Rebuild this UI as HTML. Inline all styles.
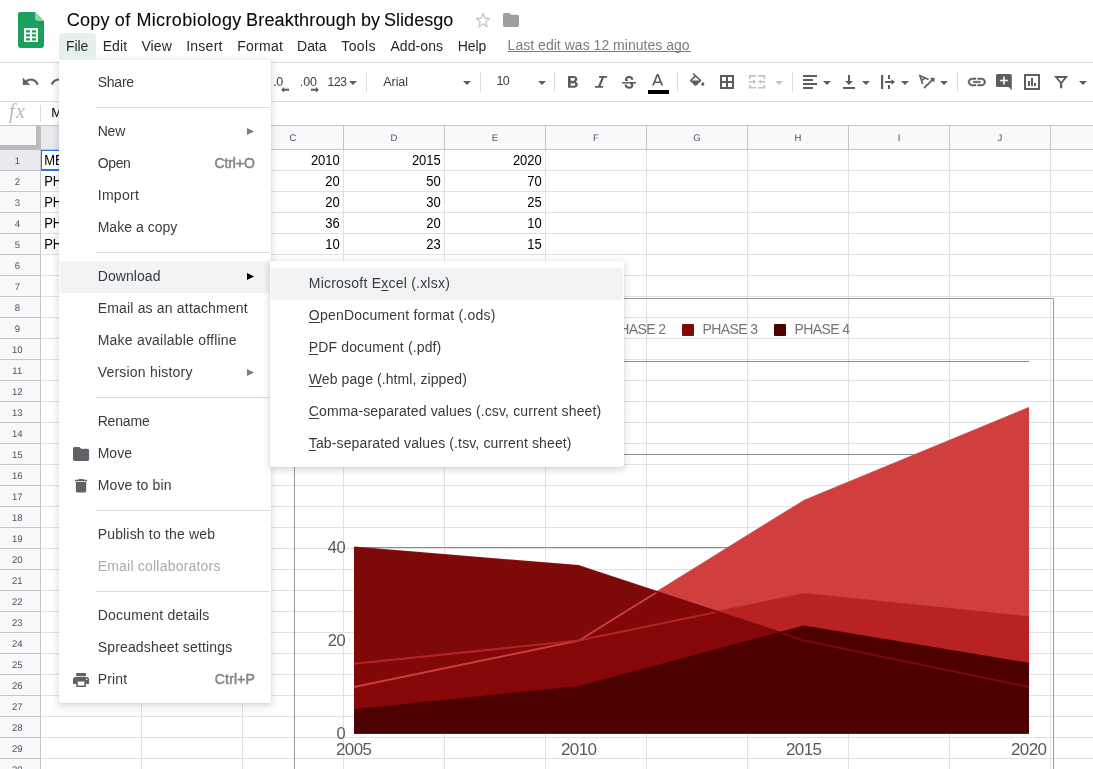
<!DOCTYPE html>
<html lang="en">
<head>
<meta charset="utf-8">
<title>Copy of Microbiology Breakthrough by Slidesgo - Google Sheets</title>
<style>
html,body{margin:0;padding:0;background:#fff;}
body{width:1093px;height:769px;overflow:hidden;position:relative;font-family:"Liberation Sans", Arial, sans-serif;}
.t{position:absolute;white-space:pre;line-height:20px;height:20px;font-family:"Liberation Sans", Arial, sans-serif;}
#app{position:absolute;left:0;top:0;width:1093px;height:769px;overflow:hidden;will-change:transform;}
.r{position:absolute;}
svg{position:absolute;overflow:visible;}
.menu{position:absolute;background:#fff;border-radius:3px;box-shadow:0 2px 6px 2px rgba(60,64,67,.15),0 1px 2px 0 rgba(60,64,67,.08);}
u{text-decoration:underline;text-underline-offset:1.5px;text-decoration-thickness:1px;}
</style>
</head>
<body>
<div id="app">
<svg width="1093" height="769" viewBox="0 0 1093 769" style="left:0;top:0" shape-rendering="crispEdges">
<rect x="0" y="126" width="1093" height="23" fill="#f8f9fa"/>
<rect x="0" y="150" width="40" height="620" fill="#f8f9fa"/>
<rect x="41" y="126" width="100" height="23" fill="#e8eaed"/>
<rect x="0" y="150" width="40" height="20" fill="#e8eaed"/>
<rect x="41" y="170" width="1052" height="1" fill="#e1e1e1"/>
<rect x="41" y="191" width="1052" height="1" fill="#e1e1e1"/>
<rect x="41" y="212" width="1052" height="1" fill="#e1e1e1"/>
<rect x="41" y="233" width="1052" height="1" fill="#e1e1e1"/>
<rect x="41" y="254" width="1052" height="1" fill="#e1e1e1"/>
<rect x="41" y="275" width="1052" height="1" fill="#e1e1e1"/>
<rect x="41" y="296" width="1052" height="1" fill="#e1e1e1"/>
<rect x="41" y="317" width="1052" height="1" fill="#e1e1e1"/>
<rect x="41" y="338" width="1052" height="1" fill="#e1e1e1"/>
<rect x="41" y="359" width="1052" height="1" fill="#e1e1e1"/>
<rect x="41" y="380" width="1052" height="1" fill="#e1e1e1"/>
<rect x="41" y="401" width="1052" height="1" fill="#e1e1e1"/>
<rect x="41" y="422" width="1052" height="1" fill="#e1e1e1"/>
<rect x="41" y="443" width="1052" height="1" fill="#e1e1e1"/>
<rect x="41" y="464" width="1052" height="1" fill="#e1e1e1"/>
<rect x="41" y="485" width="1052" height="1" fill="#e1e1e1"/>
<rect x="41" y="506" width="1052" height="1" fill="#e1e1e1"/>
<rect x="41" y="527" width="1052" height="1" fill="#e1e1e1"/>
<rect x="41" y="548" width="1052" height="1" fill="#e1e1e1"/>
<rect x="41" y="569" width="1052" height="1" fill="#e1e1e1"/>
<rect x="41" y="590" width="1052" height="1" fill="#e1e1e1"/>
<rect x="41" y="611" width="1052" height="1" fill="#e1e1e1"/>
<rect x="41" y="632" width="1052" height="1" fill="#e1e1e1"/>
<rect x="41" y="653" width="1052" height="1" fill="#e1e1e1"/>
<rect x="41" y="674" width="1052" height="1" fill="#e1e1e1"/>
<rect x="41" y="695" width="1052" height="1" fill="#e1e1e1"/>
<rect x="41" y="716" width="1052" height="1" fill="#e1e1e1"/>
<rect x="41" y="737" width="1052" height="1" fill="#e1e1e1"/>
<rect x="41" y="758" width="1052" height="1" fill="#e1e1e1"/>
<rect x="41" y="779" width="1052" height="1" fill="#e1e1e1"/>
<rect x="141" y="150" width="1" height="620" fill="#e1e1e1"/>
<rect x="242" y="150" width="1" height="620" fill="#e1e1e1"/>
<rect x="343" y="150" width="1" height="620" fill="#e1e1e1"/>
<rect x="444" y="150" width="1" height="620" fill="#e1e1e1"/>
<rect x="545" y="150" width="1" height="620" fill="#e1e1e1"/>
<rect x="646" y="150" width="1" height="620" fill="#e1e1e1"/>
<rect x="747" y="150" width="1" height="620" fill="#e1e1e1"/>
<rect x="848" y="150" width="1" height="620" fill="#e1e1e1"/>
<rect x="949" y="150" width="1" height="620" fill="#e1e1e1"/>
<rect x="1050" y="150" width="1" height="620" fill="#e1e1e1"/>
<rect x="41" y="150" width="100" height="20" fill="none" stroke="#2f73de" stroke-width="2"/>
<rect x="0" y="125" width="1093" height="1" fill="#c4c7c5"/>
<rect x="0" y="149" width="1093" height="1" fill="#c4c7c5"/>
<rect x="40" y="126" width="1" height="23" fill="#c4c7c5"/>
<rect x="141" y="126" width="1" height="23" fill="#c4c7c5"/>
<rect x="242" y="126" width="1" height="23" fill="#c4c7c5"/>
<rect x="343" y="126" width="1" height="23" fill="#c4c7c5"/>
<rect x="444" y="126" width="1" height="23" fill="#c4c7c5"/>
<rect x="545" y="126" width="1" height="23" fill="#c4c7c5"/>
<rect x="646" y="126" width="1" height="23" fill="#c4c7c5"/>
<rect x="747" y="126" width="1" height="23" fill="#c4c7c5"/>
<rect x="848" y="126" width="1" height="23" fill="#c4c7c5"/>
<rect x="949" y="126" width="1" height="23" fill="#c4c7c5"/>
<rect x="1050" y="126" width="1" height="23" fill="#c4c7c5"/>
<rect x="40" y="150" width="1" height="620" fill="#c4c7c5"/>
<rect x="0" y="170" width="40" height="1" fill="#c4c7c5"/>
<rect x="0" y="191" width="40" height="1" fill="#c4c7c5"/>
<rect x="0" y="212" width="40" height="1" fill="#c4c7c5"/>
<rect x="0" y="233" width="40" height="1" fill="#c4c7c5"/>
<rect x="0" y="254" width="40" height="1" fill="#c4c7c5"/>
<rect x="0" y="275" width="40" height="1" fill="#c4c7c5"/>
<rect x="0" y="296" width="40" height="1" fill="#c4c7c5"/>
<rect x="0" y="317" width="40" height="1" fill="#c4c7c5"/>
<rect x="0" y="338" width="40" height="1" fill="#c4c7c5"/>
<rect x="0" y="359" width="40" height="1" fill="#c4c7c5"/>
<rect x="0" y="380" width="40" height="1" fill="#c4c7c5"/>
<rect x="0" y="401" width="40" height="1" fill="#c4c7c5"/>
<rect x="0" y="422" width="40" height="1" fill="#c4c7c5"/>
<rect x="0" y="443" width="40" height="1" fill="#c4c7c5"/>
<rect x="0" y="464" width="40" height="1" fill="#c4c7c5"/>
<rect x="0" y="485" width="40" height="1" fill="#c4c7c5"/>
<rect x="0" y="506" width="40" height="1" fill="#c4c7c5"/>
<rect x="0" y="527" width="40" height="1" fill="#c4c7c5"/>
<rect x="0" y="548" width="40" height="1" fill="#c4c7c5"/>
<rect x="0" y="569" width="40" height="1" fill="#c4c7c5"/>
<rect x="0" y="590" width="40" height="1" fill="#c4c7c5"/>
<rect x="0" y="611" width="40" height="1" fill="#c4c7c5"/>
<rect x="0" y="632" width="40" height="1" fill="#c4c7c5"/>
<rect x="0" y="653" width="40" height="1" fill="#c4c7c5"/>
<rect x="0" y="674" width="40" height="1" fill="#c4c7c5"/>
<rect x="0" y="695" width="40" height="1" fill="#c4c7c5"/>
<rect x="0" y="716" width="40" height="1" fill="#c4c7c5"/>
<rect x="0" y="737" width="40" height="1" fill="#c4c7c5"/>
<rect x="0" y="758" width="40" height="1" fill="#c4c7c5"/>
<rect x="0" y="779" width="40" height="1" fill="#c4c7c5"/>
<rect x="36" y="126" width="5" height="24" fill="#bcbcbc"/>
<rect x="0" y="145" width="41" height="5" fill="#bcbcbc"/>
</svg>
<span class="t" style="left:87.83px;top:129px;font-size:9.5px;color:#4f5358;text-rendering:geometricPrecision;">A</span>
<span class="t" style="left:188.83px;top:129px;font-size:9.5px;color:#4f5358;text-rendering:geometricPrecision;">B</span>
<span class="t" style="left:289.56px;top:129px;font-size:9.5px;color:#4f5358;text-rendering:geometricPrecision;">C</span>
<span class="t" style="left:390.56px;top:129px;font-size:9.5px;color:#4f5358;text-rendering:geometricPrecision;">D</span>
<span class="t" style="left:491.83px;top:129px;font-size:9.5px;color:#4f5358;text-rendering:geometricPrecision;">E</span>
<span class="t" style="left:593.09px;top:129px;font-size:9.5px;color:#4f5358;text-rendering:geometricPrecision;">F</span>
<span class="t" style="left:693.30px;top:129px;font-size:9.5px;color:#4f5358;text-rendering:geometricPrecision;">G</span>
<span class="t" style="left:794.56px;top:129px;font-size:9.5px;color:#4f5358;text-rendering:geometricPrecision;">H</span>
<span class="t" style="left:897.68px;top:129px;font-size:9.5px;color:#4f5358;text-rendering:geometricPrecision;">I</span>
<span class="t" style="left:997.62px;top:129px;font-size:9.5px;color:#4f5358;text-rendering:geometricPrecision;">J</span>
<span class="t" style="left:14.65px;top:152px;font-size:9.5px;color:#4f5358;text-rendering:geometricPrecision;">1</span>
<span class="t" style="left:14.65px;top:173px;font-size:9.5px;color:#4f5358;text-rendering:geometricPrecision;">2</span>
<span class="t" style="left:14.65px;top:194px;font-size:9.5px;color:#4f5358;text-rendering:geometricPrecision;">3</span>
<span class="t" style="left:14.65px;top:215px;font-size:9.5px;color:#4f5358;text-rendering:geometricPrecision;">4</span>
<span class="t" style="left:14.65px;top:236px;font-size:9.5px;color:#4f5358;text-rendering:geometricPrecision;">5</span>
<span class="t" style="left:14.65px;top:257px;font-size:9.5px;color:#4f5358;text-rendering:geometricPrecision;">6</span>
<span class="t" style="left:14.65px;top:278px;font-size:9.5px;color:#4f5358;text-rendering:geometricPrecision;">7</span>
<span class="t" style="left:14.65px;top:299px;font-size:9.5px;color:#4f5358;text-rendering:geometricPrecision;">8</span>
<span class="t" style="left:14.65px;top:320px;font-size:9.5px;color:#4f5358;text-rendering:geometricPrecision;">9</span>
<span class="t" style="left:12.01px;top:341px;font-size:9.5px;color:#4f5358;text-rendering:geometricPrecision;">10</span>
<span class="t" style="left:12.36px;top:362px;font-size:9.5px;color:#4f5358;text-rendering:geometricPrecision;">11</span>
<span class="t" style="left:12.01px;top:383px;font-size:9.5px;color:#4f5358;text-rendering:geometricPrecision;">12</span>
<span class="t" style="left:12.01px;top:404px;font-size:9.5px;color:#4f5358;text-rendering:geometricPrecision;">13</span>
<span class="t" style="left:12.01px;top:425px;font-size:9.5px;color:#4f5358;text-rendering:geometricPrecision;">14</span>
<span class="t" style="left:12.01px;top:446px;font-size:9.5px;color:#4f5358;text-rendering:geometricPrecision;">15</span>
<span class="t" style="left:12.01px;top:467px;font-size:9.5px;color:#4f5358;text-rendering:geometricPrecision;">16</span>
<span class="t" style="left:12.01px;top:488px;font-size:9.5px;color:#4f5358;text-rendering:geometricPrecision;">17</span>
<span class="t" style="left:12.01px;top:509px;font-size:9.5px;color:#4f5358;text-rendering:geometricPrecision;">18</span>
<span class="t" style="left:12.01px;top:530px;font-size:9.5px;color:#4f5358;text-rendering:geometricPrecision;">19</span>
<span class="t" style="left:12.01px;top:551px;font-size:9.5px;color:#4f5358;text-rendering:geometricPrecision;">20</span>
<span class="t" style="left:12.01px;top:572px;font-size:9.5px;color:#4f5358;text-rendering:geometricPrecision;">21</span>
<span class="t" style="left:12.01px;top:593px;font-size:9.5px;color:#4f5358;text-rendering:geometricPrecision;">22</span>
<span class="t" style="left:12.01px;top:614px;font-size:9.5px;color:#4f5358;text-rendering:geometricPrecision;">23</span>
<span class="t" style="left:12.01px;top:635px;font-size:9.5px;color:#4f5358;text-rendering:geometricPrecision;">24</span>
<span class="t" style="left:12.01px;top:656px;font-size:9.5px;color:#4f5358;text-rendering:geometricPrecision;">25</span>
<span class="t" style="left:12.01px;top:677px;font-size:9.5px;color:#4f5358;text-rendering:geometricPrecision;">26</span>
<span class="t" style="left:12.01px;top:698px;font-size:9.5px;color:#4f5358;text-rendering:geometricPrecision;">27</span>
<span class="t" style="left:12.01px;top:719px;font-size:9.5px;color:#4f5358;text-rendering:geometricPrecision;">28</span>
<span class="t" style="left:12.01px;top:740px;font-size:9.5px;color:#4f5358;text-rendering:geometricPrecision;">29</span>
<span class="t" style="left:12.01px;top:761px;font-size:9.5px;color:#4f5358;text-rendering:geometricPrecision;">30</span>
<span class="t" style="left:44.20px;top:151px;font-size:13px;color:#000;transform:scaleY(1.1);transform-origin:0 14.00px;">MEDICINE</span>
<span class="t" style="left:209.88px;top:151px;font-size:13px;color:#000;transform:scaleY(1.1);transform-origin:0 14.00px;">2005</span>
<span class="t" style="left:310.88px;top:151px;font-size:13px;color:#000;transform:scaleY(1.1);transform-origin:0 14.00px;">2010</span>
<span class="t" style="left:411.88px;top:151px;font-size:13px;color:#000;transform:scaleY(1.1);transform-origin:0 14.00px;">2015</span>
<span class="t" style="left:512.88px;top:151px;font-size:13px;color:#000;transform:scaleY(1.1);transform-origin:0 14.00px;">2020</span>
<span class="t" style="left:44.20px;top:172px;font-size:13px;color:#000;transform:scaleY(1.1);transform-origin:0 14.00px;">PHASE 1</span>
<span class="t" style="left:224.33px;top:172px;font-size:13px;color:#000;transform:scaleY(1.1);transform-origin:0 14.00px;">10</span>
<span class="t" style="left:325.33px;top:172px;font-size:13px;color:#000;transform:scaleY(1.1);transform-origin:0 14.00px;">20</span>
<span class="t" style="left:426.33px;top:172px;font-size:13px;color:#000;transform:scaleY(1.1);transform-origin:0 14.00px;">50</span>
<span class="t" style="left:527.33px;top:172px;font-size:13px;color:#000;transform:scaleY(1.1);transform-origin:0 14.00px;">70</span>
<span class="t" style="left:44.20px;top:193px;font-size:13px;color:#000;transform:scaleY(1.1);transform-origin:0 14.00px;">PHASE 2</span>
<span class="t" style="left:224.33px;top:193px;font-size:13px;color:#000;transform:scaleY(1.1);transform-origin:0 14.00px;">15</span>
<span class="t" style="left:325.33px;top:193px;font-size:13px;color:#000;transform:scaleY(1.1);transform-origin:0 14.00px;">20</span>
<span class="t" style="left:426.33px;top:193px;font-size:13px;color:#000;transform:scaleY(1.1);transform-origin:0 14.00px;">30</span>
<span class="t" style="left:527.33px;top:193px;font-size:13px;color:#000;transform:scaleY(1.1);transform-origin:0 14.00px;">25</span>
<span class="t" style="left:44.20px;top:214px;font-size:13px;color:#000;transform:scaleY(1.1);transform-origin:0 14.00px;">PHASE 3</span>
<span class="t" style="left:224.33px;top:214px;font-size:13px;color:#000;transform:scaleY(1.1);transform-origin:0 14.00px;">40</span>
<span class="t" style="left:325.33px;top:214px;font-size:13px;color:#000;transform:scaleY(1.1);transform-origin:0 14.00px;">36</span>
<span class="t" style="left:426.33px;top:214px;font-size:13px;color:#000;transform:scaleY(1.1);transform-origin:0 14.00px;">20</span>
<span class="t" style="left:527.33px;top:214px;font-size:13px;color:#000;transform:scaleY(1.1);transform-origin:0 14.00px;">10</span>
<span class="t" style="left:44.20px;top:235px;font-size:13px;color:#000;transform:scaleY(1.1);transform-origin:0 14.00px;">PHASE 4</span>
<span class="t" style="left:231.57px;top:235px;font-size:13px;color:#000;transform:scaleY(1.1);transform-origin:0 14.00px;">5</span>
<span class="t" style="left:325.33px;top:235px;font-size:13px;color:#000;transform:scaleY(1.1);transform-origin:0 14.00px;">10</span>
<span class="t" style="left:426.33px;top:235px;font-size:13px;color:#000;transform:scaleY(1.1);transform-origin:0 14.00px;">23</span>
<span class="t" style="left:527.33px;top:235px;font-size:13px;color:#000;transform:scaleY(1.1);transform-origin:0 14.00px;">15</span>
<svg width="1093" height="769" viewBox="0 0 1093 769" style="left:0;top:0">
<rect x="294.5" y="298.5" width="759" height="500" fill="none" stroke="#9a9a9a" stroke-width="1"/>
<line x1="354.0" y1="733.5" x2="1029.0" y2="733.5" stroke="#8c8c8c" stroke-width="1"/>
<line x1="354.0" y1="640.5" x2="1029.0" y2="640.5" stroke="#8c8c8c" stroke-width="1"/>
<line x1="354.0" y1="547.5" x2="1029.0" y2="547.5" stroke="#8c8c8c" stroke-width="1"/>
<line x1="354.0" y1="454.5" x2="1029.0" y2="454.5" stroke="#8c8c8c" stroke-width="1"/>
<line x1="354.0" y1="361.5" x2="1029.0" y2="361.5" stroke="#8c8c8c" stroke-width="1"/>
<polygon points="354.0,733.5 354.0,687.00 579.0,640.50 804.0,501.00 1029.0,408.00 1029.0,733.5" fill="#d04040" fill-opacity="1"/>
<polygon points="354.0,733.5 354.0,663.75 579.0,640.50 804.0,594.00 1029.0,617.25 1029.0,733.5" fill="#b42626" fill-opacity="1"/>
<polygon points="354.0,733.5 354.0,547.50 579.0,566.10 804.0,640.50 1029.0,687.00 1029.0,733.5" fill="#7e0909" fill-opacity="1"/>
<polygon points="354.0,733.5 354.0,687.00 579.0,640.50 804.0,501.00 1029.0,408.00 1029.0,733.5" fill="#ff0000" fill-opacity="0.03"/>
<polygon points="354.0,733.5 354.0,663.75 579.0,640.50 804.0,594.00 1029.0,617.25 1029.0,733.5" fill="#ff0000" fill-opacity="0.03"/>
<polygon points="354.0,733.5 354.0,710.25 579.0,687.00 804.0,626.55 1029.0,663.75 1029.0,733.5" fill="#4d0000" fill-opacity="1"/>
<polyline points="354.0,687.00 579.0,640.50 804.0,501.00 1029.0,408.00" fill="none" stroke="#d04040" stroke-width="2" stroke-opacity="0.95" stroke-linecap="butt" stroke-linejoin="round"/>
<polyline points="354.0,663.75 579.0,640.50 804.0,594.00 1029.0,617.25" fill="none" stroke="#b42626" stroke-width="2" stroke-opacity="0.95" stroke-linecap="butt" stroke-linejoin="round"/>
<polyline points="354.0,547.50 579.0,566.10 804.0,640.50 1029.0,687.00" fill="none" stroke="#7e0909" stroke-width="2" stroke-opacity="0.95" stroke-linecap="butt" stroke-linejoin="round"/>
<polyline points="354.0,710.25 579.0,687.00 804.0,626.55 1029.0,663.75" fill="none" stroke="#4d0000" stroke-width="2" stroke-opacity="0.95" stroke-linecap="butt" stroke-linejoin="round"/>
<rect x="498" y="324" width="12" height="12" rx="1" fill="#d04040"/>
<rect x="590" y="324" width="12" height="12" rx="1" fill="#b42626"/>
<rect x="682" y="324" width="12" height="12" rx="1" fill="#7e0909"/>
<rect x="774" y="324" width="12" height="12" rx="1" fill="#4d0000"/>
</svg>
<span class="t" style="left:518.50px;top:319px;font-size:14px;color:#757575;letter-spacing:-0.592px;">PHASE 1</span>
<span class="t" style="left:610.50px;top:319px;font-size:14px;color:#757575;letter-spacing:-0.592px;">PHASE 2</span>
<span class="t" style="left:702.50px;top:319px;font-size:14px;color:#757575;letter-spacing:-0.592px;">PHASE 3</span>
<span class="t" style="left:794.50px;top:319px;font-size:14px;color:#757575;letter-spacing:-0.592px;">PHASE 4</span>
<span class="t" style="left:336.41px;top:723px;font-size:16.5px;color:#5a5a5a;letter-spacing:-0.500px;">0</span>
<span class="t" style="left:327.74px;top:630px;font-size:16.5px;color:#5a5a5a;letter-spacing:-0.500px;">20</span>
<span class="t" style="left:327.74px;top:537px;font-size:16.5px;color:#5a5a5a;letter-spacing:-0.500px;">40</span>
<span class="t" style="left:327.74px;top:444px;font-size:16.5px;color:#5a5a5a;letter-spacing:-0.500px;">60</span>
<span class="t" style="left:327.74px;top:351px;font-size:16.5px;color:#5a5a5a;letter-spacing:-0.500px;">80</span>
<span class="t" style="left:335.91px;top:740px;font-size:17px;color:#5a5a5a;letter-spacing:-0.550px;">2005</span>
<span class="t" style="left:560.91px;top:740px;font-size:17px;color:#5a5a5a;letter-spacing:-0.550px;">2010</span>
<span class="t" style="left:785.91px;top:740px;font-size:17px;color:#5a5a5a;letter-spacing:-0.550px;">2015</span>
<span class="t" style="left:1010.91px;top:740px;font-size:17px;color:#5a5a5a;letter-spacing:-0.550px;">2020</span>
<div class="r" style="left:0px;top:0px;width:1093px;height:62px;background:#fff;"></div>
<div class="r" style="left:0px;top:62px;width:1093px;height:1px;background:#d9d9d9;"></div>
<div class="r" style="left:0px;top:63px;width:1093px;height:38px;background:#fff;"></div>
<div class="r" style="left:0px;top:101px;width:1093px;height:1px;background:#d9d9d9;"></div>
<div class="r" style="left:0px;top:102px;width:1093px;height:23px;background:#fff;"></div>
<svg width="26" height="36" viewBox="0 0 26 36" style="left:18px;top:12px">
<path d="M2.4 0H17l9 9v24.6A2.4 2.4 0 0 1 23.6 36H2.4A2.4 2.4 0 0 1 0 33.600V2.4A2.4 2.4 0 0 1 2.400 0z" fill="#1ca05c"/>
<path d="M17 0l9 9h-6.600A2.400 2.400 0 0 1 17 6.600z" fill="#88d6b0"/>
<path d="M17.700 8.700L26 15V9z" fill="#1a8f55" opacity=".55"/>
<path d="M6 16h14v14H6zM8 18.200v2.300h4v-2.300zm6 0v2.300h4v-2.300zM8 22.200v2.300h4v-2.300zm6 0v2.300h4v-2.300zM8 26.200v2.300h4v-2.300zm6 0v2.300h4v-2.300z" fill="#fff" fill-rule="evenodd"/>
</svg>
<div class="title" style="position:absolute;left:0;top:0;width:0;height:0">
<span class="t" style="left:66.80px;top:10px;font-size:18px;color:#0a0a0a;letter-spacing:0.242px;-webkit-text-stroke:0.1px #0a0a0a;">Copy</span>
 
<span class="t" style="left:114.70px;top:10px;font-size:18px;color:#0a0a0a;letter-spacing:0.642px;-webkit-text-stroke:0.1px #0a0a0a;">of</span>
 
<span class="t" style="left:136.40px;top:10px;font-size:18px;color:#0a0a0a;letter-spacing:0.354px;-webkit-text-stroke:0.1px #0a0a0a;">Microbiology</span>
 
<span class="t" style="left:246.10px;top:10px;font-size:18px;color:#0a0a0a;letter-spacing:0.160px;-webkit-text-stroke:0.1px #0a0a0a;">Breakthrough</span>
 
<span class="t" style="left:361.00px;top:10px;font-size:18px;color:#0a0a0a;letter-spacing:-0.058px;-webkit-text-stroke:0.1px #0a0a0a;">by</span>
 
<span class="t" style="left:384.10px;top:10px;font-size:18px;color:#0a0a0a;letter-spacing:0.007px;-webkit-text-stroke:0.1px #0a0a0a;">Slidesgo</span>
</div>
<svg width="16" height="16" viewBox="2 2 20 19" preserveAspectRatio="none" style="left:475px;top:12px"><path fill="#c6c6c6" d="M22 9.240l-7.190-.620L12 2 9.190 8.630 2 9.240l5.460 4.730L5.820 21 12 17.270 18.180 21l-1.630-7.030L22 9.240zM12 15.400l-3.760 2.270 1-4.280-3.320-2.880 4.380-.380L12 6.100l1.710 4.040 4.380.380-3.320 2.880 1 4.280L12 15.400z"/></svg>
<svg width="16" height="14" viewBox="2 4 20 16" preserveAspectRatio="none" style="left:503px;top:13px"><path fill="#9e9e9e" d="M10 4H4c-1.100 0-1.990.900-1.990 2L2 18c0 1.100.900 2 2 2h16c1.100 0 2-.900 2-2V8c0-1.100-.900-2-2-2h-8l-2-2z"/></svg>
<span class="t" style="left:102.70px;top:36px;font-size:14px;color:#26282a;letter-spacing:0.069px;">Edit</span>
<span class="t" style="left:141.40px;top:36px;font-size:14px;color:#26282a;letter-spacing:0.102px;">View</span>
<span class="t" style="left:186.20px;top:36px;font-size:14px;color:#26282a;letter-spacing:0.247px;">Insert</span>
<span class="t" style="left:237.20px;top:36px;font-size:14px;color:#26282a;letter-spacing:0.259px;">Format</span>
<span class="t" style="left:297.10px;top:36px;font-size:14px;color:#26282a;letter-spacing:-0.070px;">Data</span>
<span class="t" style="left:341.30px;top:36px;font-size:14px;color:#26282a;letter-spacing:0.363px;">Tools</span>
<span class="t" style="left:390.40px;top:36px;font-size:14px;color:#26282a;letter-spacing:0.092px;">Add-ons</span>
<span class="t" style="left:457.70px;top:36px;font-size:14px;color:#26282a;letter-spacing:-0.049px;">Help</span>
<span class="t" style="left:507.60px;top:35px;font-size:14px;color:#7a7c7f;letter-spacing:0.027px;">Last edit was 12 minutes ago</span>
<div class="r" style="left:508px;top:51px;width:182.5px;height:1px;background:#7a7c7f;"></div>
<svg width="15.50" height="6.70" viewBox="2.000 7.000 20.470 9.000" preserveAspectRatio="none" style="left:23.00px;top:78.10px"><path fill="#5a5e62" stroke="#5a5e62" stroke-width="0.5" stroke-linejoin="round" d="M12.500 8c-2.650 0-5.050.990-6.900 2.600L2 7v9h9l-3.620-3.620c1.390-1.160 3.160-1.880 5.120-1.880 3.540 0 6.550 2.310 7.600 5.500l2.370-.780C21.080 11.030 17.150 8 12.500 8z"/></svg>
<svg width="15.50" height="6.70" viewBox="1.540 7.000 20.460 9.000" preserveAspectRatio="none" style="left:51.40px;top:78.10px"><path fill="#5a5e62" stroke="#5a5e62" stroke-width="0.5" stroke-linejoin="round" d="M18.400 10.600C16.550 8.990 14.150 8 11.500 8c-4.650 0-8.580 3.030-9.960 7.220L3.900 16c1.050-3.190 4.050-5.500 7.600-5.500 1.950 0 3.730.720 5.120 1.880L13 16h9V7l-3.600 3.600z"/></svg>
<span class="t" style="left:273.20px;top:72px;font-size:12.5px;color:#3c4043;letter-spacing:-0.319px;">.0</span>
<svg width="8" height="5.6" viewBox="0 0 8 5.6" style="left:281.2px;top:87px"><path d="M0 2.800L3.200 0v1.800H8v2H3.200v1.800z" fill="#5a5e62"/></svg>
<span class="t" style="left:299.80px;top:72px;font-size:12.5px;color:#3c4043;letter-spacing:-0.130px;">.00</span>
<svg width="8" height="5.6" viewBox="0 0 8 5.6" style="left:311.2px;top:87px"><path d="M8 2.800L4.800 0v1.800H0v2h4.800v1.800z" fill="#5a5e62"/></svg>
<span class="t" style="left:327.60px;top:72px;font-size:12px;color:#3c4043;letter-spacing:-0.310px;">123</span>
<svg width="8" height="4" viewBox="0 0 8 4" style="left:348.50px;top:81px"><path d="M0 0h8L4.0 4z" fill="#5a5e62"/></svg>
<div class="r" style="left:366px;top:72px;width:1px;height:20px;background:#dadce0;"></div>
<span class="t" style="left:383.30px;top:72px;font-size:12.5px;color:#3c4043;letter-spacing:-0.083px;">Arial</span>
<svg width="8" height="4" viewBox="0 0 8 4" style="left:463.30px;top:81px"><path d="M0 0h8L4.0 4z" fill="#5a5e62"/></svg>
<div class="r" style="left:480px;top:72px;width:1px;height:20px;background:#dadce0;"></div>
<span class="t" style="left:496.40px;top:71px;font-size:12.5px;color:#3c4043;letter-spacing:-0.603px;">10</span>
<svg width="8" height="4" viewBox="0 0 8 4" style="left:538.00px;top:81px"><path d="M0 0h8L4.0 4z" fill="#5a5e62"/></svg>
<div class="r" style="left:554px;top:72px;width:1px;height:20px;background:#dadce0;"></div>
<svg width="9.80" height="11.80" viewBox="7.000 4.000 10.750 14.000" preserveAspectRatio="none" style="left:568.00px;top:76.20px"><path fill="#5a5e62" d="M15.600 10.790c.970-.670 1.650-1.770 1.650-2.790 0-2.260-1.750-4-4-4H7v14h7.040c2.090 0 3.710-1.700 3.710-3.790 0-1.520-.860-2.820-2.150-3.420zM10 6.500h3c.830 0 1.500.670 1.500 1.500s-.670 1.500-1.500 1.500h-3v-3zm3.500 9H10v-3h3.500c.830 0 1.500.670 1.500 1.500s-.670 1.500-1.500 1.500z"/></svg>
<svg width="12.1" height="11.8" viewBox="0 0 12 12" preserveAspectRatio="none" style="left:595px;top:76.2px"><path fill="#5a5e62" d="M4 0h8v1.800H8.900L5.500 10.200H8V12H0v-1.800h3.100L6.500 1.800H4z"/></svg>
<svg width="14.00" height="12.70" viewBox="3.000 3.000 18.000 15.010" preserveAspectRatio="none" style="left:622.00px;top:75.90px"><path fill="#5a5e62" d="M7.240 8.750c-.260-.480-.390-1.030-.390-1.670 0-.610.130-1.160.400-1.670.260-.500.630-.930 1.110-1.290.480-.350 1.050-.630 1.700-.830.660-.190 1.390-.290 2.180-.290.810 0 1.540.110 2.210.340.660.220 1.230.540 1.690.940.470.400.830.880 1.080 1.430.250.550.380 1.150.380 1.810h-3.010c0-.310-.050-.590-.150-.850-.090-.270-.240-.490-.440-.680-.200-.190-.450-.330-.750-.440-.300-.100-.660-.160-1.060-.160-.390 0-.740.040-1.030.130-.290.090-.530.210-.720.360-.190.160-.340.340-.440.550-.100.210-.150.430-.150.660 0 .480.250.880.740 1.210.380.250.770.480 1.410.700H7.390c-.050-.080-.110-.170-.150-.250zM21 12v-2H3v2h9.620c.180.070.400.140.550.200.370.170.660.340.870.510.210.170.350.360.430.570.070.200.110.430.110.690 0 .230-.050.450-.140.660-.090.200-.230.380-.420.530-.190.150-.420.260-.710.350-.290.080-.630.130-1.010.130-.430 0-.830-.040-1.180-.130s-.660-.230-.910-.420c-.250-.190-.450-.440-.590-.750-.140-.310-.250-.760-.250-1.210H6.400c0 .550.080 1.130.240 1.580.160.450.370.850.650 1.210.280.350.600.660.980.920.370.260.780.480 1.220.650.440.170.900.300 1.380.390.480.080.960.130 1.440.130.800 0 1.530-.090 2.180-.280s1.210-.450 1.670-.790c.460-.340.820-.770 1.070-1.270s.380-1.070.380-1.710c0-.600-.100-1.140-.310-1.610-.050-.110-.110-.230-.170-.330H21z"/></svg>
<svg width="11.20" height="11.60" viewBox="5.500 3.000 12.990 14.000" preserveAspectRatio="none" style="left:652.30px;top:74.20px"><path fill="#5a5e62" d="M11 3L5.500 17h2.250l1.120-3h6.250l1.120 3h2.250L13 3h-2zm-1.380 9L12 5.670 14.380 12H9.620z"/></svg>
<div class="r" style="left:648px;top:90px;width:21px;height:4px;background:#000;"></div>
<div class="r" style="left:677px;top:72px;width:1px;height:20px;background:#dadce0;"></div>
<svg width="14.40" height="12.80" viewBox="2.997 0.000 18.003 17.000" preserveAspectRatio="none" style="left:689.90px;top:73.20px"><path fill="#5a5e62" d="M16.560 8.940L7.620 0 6.210 1.410l2.380 2.380-5.150 5.150c-.590.590-.590 1.540 0 2.120l5.500 5.500c.290.290.680.440 1.060.440s.770-.150 1.060-.440l5.500-5.500c.590-.580.590-1.530 0-2.120zM5.210 10L10 5.210 14.790 10H5.210zM19 11.500s-2 2.170-2 3.500c0 1.100.900 2 2 2s2-.900 2-2c0-1.330-2-3.500-2-3.500z"/></svg>
<svg width="14" height="14" viewBox="0 0 14 14" shape-rendering="crispEdges" style="left:720px;top:75px"><path fill="#5a5e62" fill-rule="evenodd" d="M0 0h14v14H0zM2 2v4h4V2zM8 2v4h4V2zM2 8v4h4V8zM8 8v4h4V8z"/></svg>
<svg width="16.2" height="13.6" viewBox="0 0 16 14" preserveAspectRatio="none" style="left:748.8px;top:75.1px" fill="#c2c2c2"><path d="M0 0h7v1.700H1.700V4H0zM9 0h7v4h-1.700V1.700H9zM0 14h7v-1.700H1.700V10H0zM9 14h7v-4h-1.700v2.300H9zM0 6.200h4V4.400L7 7 4 9.600V7.800H0zM16 6.200h-4V4.400L9 7l3 2.600V7.800h4z"/></svg>
<svg width="8" height="4" viewBox="0 0 8 4" style="left:775.00px;top:81px"><path d="M0 0h8L4.0 4z" fill="#c4c4c4"/></svg>
<div class="r" style="left:792px;top:72px;width:1px;height:20px;background:#dadce0;"></div>
<svg width="14" height="14" viewBox="0 0 14 14" style="left:803px;top:75px"><path fill="#5a5e62" d="M0 0h14v2H0zM0 4h10v2H0zM0 8h14v2H0zM0 12h10v2H0z"/></svg>
<svg width="8" height="4" viewBox="0 0 8 4" style="left:823.00px;top:81px"><path d="M0 0h8L4.0 4z" fill="#5a5e62"/></svg>
<svg width="12" height="14" viewBox="0 0 12 14" style="left:843.2px;top:75px"><path fill="#5a5e62" d="M0 12h12v2H0zM5 0h2v6h3L6 10 2 6h3z"/></svg>
<svg width="8" height="4" viewBox="0 0 8 4" style="left:862.20px;top:81px"><path d="M0 0h8L4.0 4z" fill="#5a5e62"/></svg>
<svg width="14" height="14" viewBox="0 0 14 14" style="left:880.6px;top:75px" fill="#5a5e62"><path d="M0 0h2.200v14H0zM7 0h2v4H7zM7 10h2v4H7zM4 6h6.500V4.200L14 7l-3.500 2.800V8H4z"/></svg>
<svg width="8" height="4" viewBox="0 0 8 4" style="left:901.00px;top:81px"><path d="M0 0h8L4.0 4z" fill="#5a5e62"/></svg>
<svg width="16" height="14" viewBox="0 0 16 14" style="left:919.4px;top:75px"><path d="M9.600 4.400L0.900 0.700L3.700 8.900M6.100 2.900L2.600 5.600" fill="none" stroke="#5a5e62" stroke-width="1.600" stroke-linejoin="miter"/><path d="M5 13.200L13.600 4.600" fill="none" stroke="#5a5e62" stroke-width="1.800"/><path d="M10.800 3.100L15.700 2.700L15.300 7.600z" fill="#5a5e62"/></svg>
<svg width="8" height="4" viewBox="0 0 8 4" style="left:940.00px;top:81px"><path d="M0 0h8L4.0 4z" fill="#5a5e62"/></svg>
<div class="r" style="left:957px;top:72px;width:1px;height:20px;background:#dadce0;"></div>
<svg width="17.70" height="8.00" viewBox="2.000 7.000 20.000 10.000" preserveAspectRatio="none" style="left:967.50px;top:77.70px"><path fill="#5a5e62" stroke="#5a5e62" stroke-width="0.5" stroke-linejoin="round" d="M3.900 12c0-1.710 1.390-3.100 3.100-3.100h4V7H7c-2.760 0-5 2.240-5 5s2.240 5 5 5h4v-1.900H7c-1.710 0-3.100-1.390-3.100-3.100zM8 13h8v-2H8v2zm9-6h-4v1.900h4c1.710 0 3.100 1.390 3.100 3.100s-1.390 3.100-3.100 3.100h-4V17h4c2.760 0 5-2.240 5-5s-2.240-5-5-5z"/></svg>
<svg width="15.80" height="16.20" viewBox="2.000 2.000 20.000 20.000" preserveAspectRatio="none" style="left:996.20px;top:74.20px"><path fill="#5a5e62" d="M21.990 4c0-1.100-.890-2-1.990-2H4c-1.100 0-2 .900-2 2v12c0 1.100.900 2 2 2h14l4 4-.010-18zM17 11h-4v4h-2v-4H7V9h4V5h2v4h4v2z"/></svg>
<svg width="16" height="16" viewBox="0 0 16 16" shape-rendering="crispEdges" style="left:1024px;top:74px"><path fill="#5a5e62" fill-rule="evenodd" d="M0 0h16v16H0zM2 2v12h12V2zM4 7h2v5H4zM7 4h2v8H7zM10 9h2v3h-2z"/></svg>
<svg width="14.2" height="12.2" viewBox="0 0 14 12" preserveAspectRatio="none" style="left:1054px;top:75.9px"><path fill="#5a5e62" fill-rule="evenodd" d="M0 0h14L8.100 7.200V12H5.900V7.200zM3.900 2L7 5.700 10.100 2z"/></svg>
<svg width="8" height="4" viewBox="0 0 8 4" style="left:1079.00px;top:81px"><path d="M0 0h8L4.0 4z" fill="#5a5e62"/></svg>
<span class="t" style="left:9.00px;top:101px;font-size:20px;color:#b4b8bc;font-family:'Liberation Serif',serif;font-style:italic;letter-spacing:1.4px;">fx</span>
<div class="r" style="left:40px;top:105px;width:1px;height:17px;background:#dadce0;"></div>
<span class="t" style="left:51.20px;top:103px;font-size:13px;color:#000;">MEDICINE</span>
<div class="menu" style="left:59px;top:60px;width:212px;height:643px;border-radius:0 3px 3px 3px"></div>
<div class="r" style="left:60px;top:261px;width:210px;height:32px;background:#f1f3f4;"></div>
<div class="r" style="left:96px;top:107px;width:174px;height:1px;background:#dadada;"></div>
<div class="r" style="left:96px;top:252px;width:174px;height:1px;background:#dadada;"></div>
<div class="r" style="left:96px;top:397px;width:174px;height:1px;background:#dadada;"></div>
<div class="r" style="left:96px;top:510px;width:174px;height:1px;background:#dadada;"></div>
<div class="r" style="left:96px;top:591px;width:174px;height:1px;background:#dadada;"></div>
<span class="t" style="left:97.70px;top:72px;font-size:14px;color:#383b3e;letter-spacing:-0.232px;">Share</span>
<span class="t" style="left:97.70px;top:121px;font-size:14px;color:#383b3e;letter-spacing:-0.205px;">New</span>
<span class="t" style="left:97.70px;top:153px;font-size:14px;color:#383b3e;letter-spacing:-0.363px;">Open</span>
<span class="t" style="left:97.70px;top:185px;font-size:14px;color:#383b3e;letter-spacing:0.302px;">Import</span>
<span class="t" style="left:97.70px;top:217px;font-size:14px;color:#383b3e;letter-spacing:0.020px;">Make a copy</span>
<span class="t" style="left:97.70px;top:266px;font-size:14px;color:#383b3e;letter-spacing:0.079px;">Download</span>
<span class="t" style="left:97.70px;top:298px;font-size:14px;color:#383b3e;letter-spacing:0.177px;">Email as an attachment</span>
<span class="t" style="left:97.70px;top:330px;font-size:14px;color:#383b3e;letter-spacing:0.214px;">Make available offline</span>
<span class="t" style="left:97.70px;top:362px;font-size:14px;color:#383b3e;letter-spacing:0.211px;">Version history</span>
<span class="t" style="left:97.70px;top:411px;font-size:14px;color:#383b3e;letter-spacing:-0.187px;">Rename</span>
<span class="t" style="left:97.70px;top:443px;font-size:14px;color:#383b3e;letter-spacing:0.016px;">Move</span>
<span class="t" style="left:97.70px;top:475px;font-size:14px;color:#383b3e;letter-spacing:0.148px;">Move to bin</span>
<span class="t" style="left:97.70px;top:524px;font-size:14px;color:#383b3e;letter-spacing:0.166px;">Publish to the web</span>
<span class="t" style="left:97.70px;top:556px;font-size:14px;color:#a9acaf;letter-spacing:0.207px;">Email collaborators</span>
<span class="t" style="left:97.70px;top:605px;font-size:14px;color:#383b3e;letter-spacing:0.233px;">Document details</span>
<span class="t" style="left:97.70px;top:637px;font-size:14px;color:#383b3e;letter-spacing:0.158px;">Spreadsheet settings</span>
<span class="t" style="left:97.70px;top:669px;font-size:14px;color:#383b3e;letter-spacing:0.181px;">Print</span>
<span class="t" style="left:214.49px;top:153px;font-size:14px;color:#85878a;letter-spacing:-0.107px;-webkit-text-stroke:0.55px #85878a;">Ctrl+O</span>
<span class="t" style="left:214.85px;top:669px;font-size:14px;color:#85878a;letter-spacing:0.151px;-webkit-text-stroke:0.55px #85878a;">Ctrl+P</span>
<svg width="7" height="7" viewBox="0 0 7 7" style="left:246.6px;top:127.5px"><path d="M0 0L7 3.500 0 7z" fill="#7c7c7c"/></svg>
<svg width="7" height="7" viewBox="0 0 7 7" style="left:246.6px;top:273.3px"><path d="M0 0L7 3.500 0 7z" fill="#000"/></svg>
<svg width="7" height="7" viewBox="0 0 7 7" style="left:246.6px;top:368.5px"><path d="M0 0L7 3.500 0 7z" fill="#7c7c7c"/></svg>
<svg width="16.10" height="13.90" viewBox="2.000 4.000 20.000 16.000" preserveAspectRatio="none" style="left:73.10px;top:447.00px"><path fill="#5f6368" d="M10 4H4c-1.100 0-1.990.900-1.990 2L2 18c0 1.100.900 2 2 2h16c1.100 0 2-.900 2-2V8c0-1.100-.900-2-2-2h-8l-2-2z"/></svg>
<svg width="12.10" height="13.60" viewBox="5.000 3.000 14.000 18.000" preserveAspectRatio="none" style="left:75.10px;top:479.20px"><path fill="#5f6368" d="M6 19c0 1.100.900 2 2 2h8c1.100 0 2-.900 2-2V7H6v12zM19 4h-3.500l-1-1h-5l-1 1H5v2h14V4z"/></svg>
<svg width="16.10" height="14.10" viewBox="2.000 3.000 20.000 18.000" preserveAspectRatio="none" style="left:73.10px;top:673.00px"><path fill="#5f6368" d="M19 8H5c-1.660 0-3 1.340-3 3v6h4v4h12v-4h4v-6c0-1.660-1.340-3-3-3zm-3 11H8v-5h8v5zm3-7c-.550 0-1-.450-1-1s.450-1 1-1 1 .450 1 1-.450 1-1 1zm-1-9H6v4h12V3z"/></svg>
<div class="menu" style="left:270px;top:261px;width:354px;height:206px"></div>
<div class="r" style="left:271px;top:268px;width:352px;height:32px;background:#f1f3f4;"></div>
<span class="t" style="left:308.80px;top:273px;font-size:14px;color:#383b3e;letter-spacing:0.221px;">Microsoft E<u>x</u>cel (.xlsx)</span>
<span class="t" style="left:308.80px;top:305px;font-size:14px;color:#383b3e;letter-spacing:0.208px;"><u>O</u>penDocument format (.ods)</span>
<span class="t" style="left:308.80px;top:337px;font-size:14px;color:#383b3e;letter-spacing:0.140px;"><u>P</u>DF document (.pdf)</span>
<span class="t" style="left:308.80px;top:369px;font-size:14px;color:#383b3e;letter-spacing:0.081px;"><u>W</u>eb page (.html, zipped)</span>
<span class="t" style="left:308.80px;top:401px;font-size:14px;color:#383b3e;letter-spacing:0.128px;"><u>C</u>omma-separated values (.csv, current sheet)</span>
<span class="t" style="left:308.80px;top:433px;font-size:14px;color:#383b3e;letter-spacing:0.131px;"><u>T</u>ab-separated values (.tsv, current sheet)</span>
<div class="r" style="left:59px;top:33px;width:37px;height:27px;background:#e6f1eb;border-radius:4px 4px 0 0;"></div>
<span class="t" style="left:65.90px;top:36px;font-size:14px;color:#26282a;letter-spacing:-0.016px;">File</span>
</div>
</body>
</html>
